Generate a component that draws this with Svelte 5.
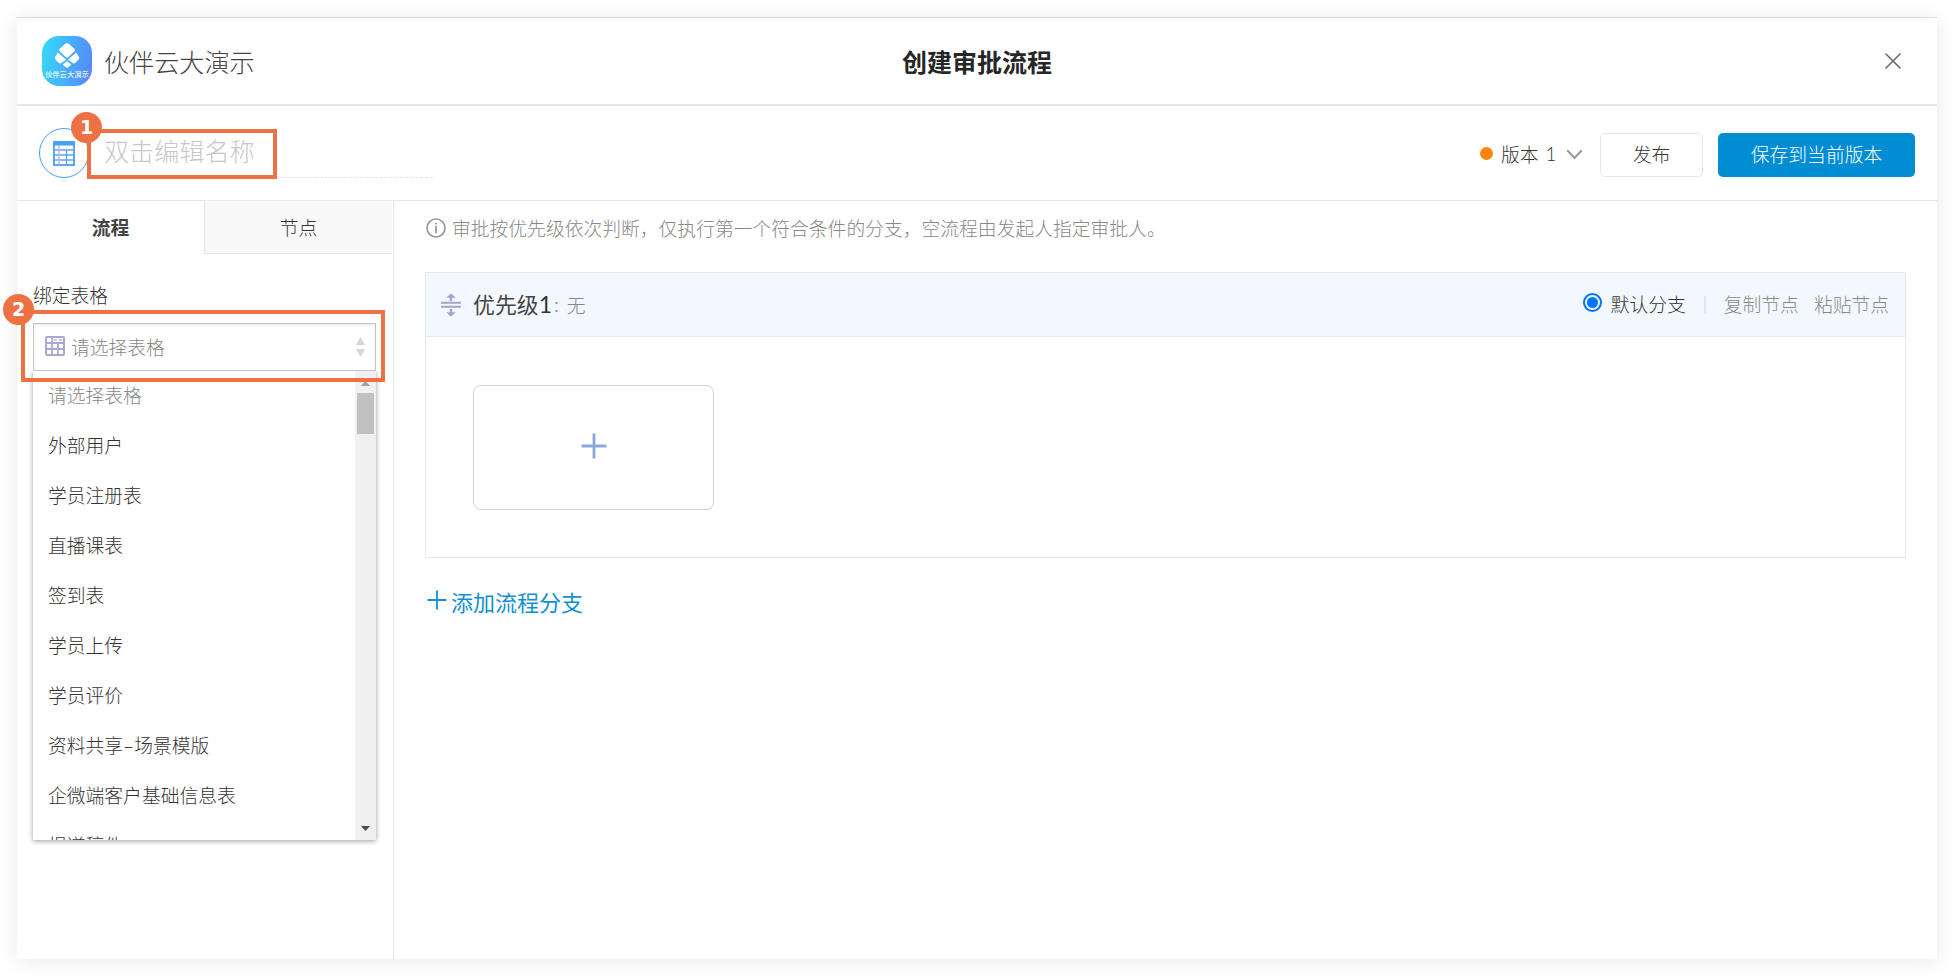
<script>
  const tables = [
    '请选择表格',
    '外部用户',
    '学员注册表',
    '直播课表',
    '签到表',
    '学员上传',
    '学员评价',
    '资料共享-场景模版',
    '企微端客户基础信息表',
    '报道稿件'
  ];
</script>

<div class="window">
  <header class="titlebar">
    <div class="brand">
      <div class="logo">
        <svg width="50" height="50" viewBox="0 0 50 50">
          <g fill="#fff">
            <path d="M23.6 7.6 Q25 6.4 26.4 7.6 L32.6 13 Q33.6 14 32.6 15 L26 21.2 Q25 22 24 21.2 L17.4 15 Q16.4 14 17.4 13 Z" />
            <path d="M15.8 16.6 L24.2 23.8 L18.8 27.2 Q17.8 27.8 16.9 27 L13.2 23.2 Q12.2 22 13.1 20.8 Z" />
            <path d="M34.2 16.6 L25.8 23.8 L31.2 27.2 Q32.2 27.8 33.1 27 L36.8 23.2 Q37.8 22 36.9 20.8 Z" />
            <path d="M25 25.2 L29.4 28.6 L26.2 31.2 Q25 32 23.8 31.2 L20.6 28.6 Z" />
          </g>
        </svg>
        <span class="logo-text">伙伴云大演示</span>
      </div>
      <span class="brand-name">伙伴云大演示</span>
    </div>
    <h1>创建审批流程</h1>
    <svg class="close" width="18" height="18" viewBox="0 0 18 18">
      <path d="M1.5 1.5 L16.5 16.5 M16.5 1.5 L1.5 16.5" stroke="#666" stroke-width="1.5" fill="none" />
    </svg>
  </header>

  <div class="toolbar">
    <div class="flow-icon">
      <svg width="22" height="25" viewBox="0 0 22 25">
        <rect x="1" y="1" width="20" height="23" fill="#fff" stroke="#459ff5" stroke-width="1.8" />
        <rect x="0.5" y="0.5" width="21" height="4" fill="#459ff5" />
        <path d="M1 9 H21 M1 14 H21 M1 19 H21" stroke="#5aa5f5" stroke-width="1.4" />
        <path d="M6 4 V24" stroke="#c0b2f2" stroke-width="1.4" />
        <path d="M13.5 9 V24" stroke="#5aa5f5" stroke-width="1.4" />
      </svg>
    </div>
    <div class="name-field">双击编辑名称</div>
    <div class="actions">
      <span class="dot"></span>
      <span class="version">版本<b>1</b></span>
      <svg class="chevron" width="17" height="12" viewBox="0 0 17 12">
        <path d="M1.2 1.2 L8.5 9 L15.8 1.2" stroke="#9a9a9a" stroke-width="2" fill="none" />
      </svg>
      <button class="publish">发布</button>
      <button class="save">保存到当前版本</button>
    </div>
    <div class="mark mark-name"><i>1</i></div>
  </div>

  <div class="body">
    <aside>
      <nav>
        <div class="tab active">流程</div>
        <div class="tab">节点</div>
      </nav>
      <div class="form">
        <div class="label">绑定表格</div>
        <div class="select-wrap">
          <div class="select">
            <svg width="20" height="20" viewBox="0 0 20 20">
              <rect x="1" y="1" width="18" height="18" rx="1" fill="none" stroke="#a9a9d0" stroke-width="2" />
              <path d="M1 7 H19 M1 13 H19 M7 1 V19 M13 7 V19" stroke="#a9a9d0" stroke-width="1.8" />
              <path d="M9 3.8 H12 M13.5 3.8 H17" stroke="#a9a9d0" stroke-width="1.2" />
            </svg>
            <span>请选择表格</span>
            <svg class="sort" width="9" height="20" viewBox="0 0 9 20">
              <path d="M4.5 0 L9 8 H0 Z M0 12 H9 L4.5 20 Z" fill="#d6d6d6" />
            </svg>
          </div>
          <div class="mark mark-select"><i>2</i></div>
          <div class="dropdown">
            <ul>
              {#each tables as name, i}
                <li class:placeholder={i === 0}>
                  {#each name.split('-') as part, j}{#if j > 0}<span class="hyphen">-</span>{/if}{part}{/each}
                </li>
              {/each}
            </ul>
            <div class="scrollbar">
              <svg width="9" height="5" viewBox="0 0 9 5"><path d="M0 5 L4.5 0 L9 5 Z" fill="#a0a0a0" /></svg>
              <span class="thumb"></span>
              <svg class="down" width="9" height="5" viewBox="0 0 9 5"><path d="M0 0 L4.5 5 L9 0 Z" fill="#4c4c4c" /></svg>
            </div>
          </div>
        </div>
      </div>
    </aside>

    <main>
      <p class="tip">
        <svg width="20" height="20" viewBox="0 0 20 20">
          <circle cx="10" cy="10" r="9" fill="none" stroke="#999" stroke-width="1.7" />
          <path d="M10 8 V15.2 M10 4.8 V6.6" stroke="#999" stroke-width="1.8" />
        </svg>
        <span>审批按优先级依次判断，仅执行第一个符合条件的分支，空流程由发起人指定审批人。</span>
      </p>

      <section class="branch">
        <div class="branch-head">
          <svg width="22" height="24" viewBox="0 0 22 24">
            <path d="M1 9.8 H21 M1 13.8 H21" stroke="#a3a3cc" stroke-width="2" />
            <path d="M11 1 V8 M11 16 V23" stroke="#a3a3cc" stroke-width="2.4" />
            <path d="M6.2 4.8 L11 0.4 L15.8 4.8 Z M6.2 19.2 L11 23.6 L15.8 19.2 Z" fill="#a3a3cc" />
          </svg>
          <span class="priority">优先级</span><b class="num">1</b><span class="colon">:</span>
          <span class="none">无</span>
          <div class="branch-actions">
            <span class="radio"></span>
            <span class="default">默认分支</span>
            <span class="sep"></span>
            <span class="copy">复制节点</span>
            <span>粘贴节点</span>
          </div>
        </div>
        <div class="canvas">
          <div class="node">
            <svg width="26" height="26" viewBox="0 0 26 26">
              <path d="M13 0.5 V25.5 M0.5 13 H25.5" stroke="#8ca7dd" stroke-width="2.8" />
            </svg>
          </div>
        </div>
      </section>

      <div class="add">
        <svg width="20" height="20" viewBox="0 0 20 20">
          <path d="M10 0.5 V19.5 M0.5 10 H19.5" stroke="#118fd2" stroke-width="1.8" />
        </svg>
        <span>添加流程分支</span>
      </div>
    </main>
  </div>
</div>

<style>
  :global(body) {
    background: #fff;
    overflow: hidden;
  }
  * {
    box-sizing: border-box;
  }
  .window {
    width: 1920px;
    height: 942px;
    margin: 17px;
    display: flex;
    flex-direction: column;
    background: #fff;
    border-top: 1px solid #dadada;
    box-shadow: 0 2px 20px rgba(0, 0, 0, 0.09);
    font-family: 'Noto Sans CJK SC', sans-serif;
    font-weight: 300;
    font-size: 18.8px;
    line-height: 28px;
    color: #333;
    white-space: nowrap;
  }
  .titlebar {
    height: 88px;
    display: grid;
    grid-template-columns: 1fr auto 1fr;
    align-items: center;
    border-bottom: 2px solid #e8e8e8;
  }
  .brand {
    display: flex;
    align-items: center;
    gap: 12px;
    padding-left: 25px;
  }
  .logo {
    width: 50px;
    height: 50px;
    border-radius: 17px;
    background: linear-gradient(100deg, #36dcf7, #45b4fb 45%, #5a83fa);
    position: relative;
    overflow: hidden;
  }
  .logo-text {
    position: absolute;
    left: 3px;
    top: 33px;
    font-size: 7.3px;
    line-height: 11px;
    font-weight: 500;
    color: #e6f6ff;
  }
  .brand-name {
    font-size: 25.1px;
    line-height: 36px;
    color: #444;
    padding-bottom: 1px;
  }
  h1 {
    margin: 0;
    font-size: 25px;
    line-height: 36px;
    font-weight: 700;
    color: #262626;
  }
  .close {
    justify-self: end;
    margin-right: 35px;
  }
  .toolbar {
    height: 95px;
    display: flex;
    align-items: center;
    padding: 0 22px;
    border-bottom: 1px solid #e6e6e6;
    position: relative;
  }
  .flow-icon {
    width: 50px;
    height: 50px;
    border: 1px solid #459ff5;
    border-radius: 50%;
    display: grid;
    place-items: center;
  }
  .name-field {
    width: 329px;
    height: 50px;
    margin-left: 15px;
    font-size: 25.1px;
    line-height: 44px;
    color: #c8c8c8;
    border-bottom: 1px dashed #e2e2e2;
  }
  .actions {
    margin-left: auto;
    display: flex;
    align-items: center;
    padding-top: 3px;
  }
  .dot {
    width: 13px;
    height: 13px;
    margin-bottom: 3px;
    border-radius: 50%;
    background: #ff8606;
  }
  .version {
    margin: 0 0 2px 8px;
    display: flex;
    width: 65px;
  }
  b {
    font-family: Lato, sans-serif;
    font-weight: 300;
  }
  .version b {
    margin-left: 7px;
  }
  .chevron {
    margin-top: 1px;
  }
  button {
    font: inherit;
    height: 44px;
    padding: 0 0 2px;
    border-radius: 5px;
  }
  .publish {
    width: 103px;
    margin-left: 17px;
    background: #fff;
    border: 1px solid #e6e6e6;
    color: #333;
  }
  .save {
    width: 197px;
    margin-left: 15px;
    background: #008dd4;
    border: 0;
    color: #fff;
  }
  .mark {
    position: absolute;
    border: 4px solid #ee7144;
    z-index: 5;
  }
  .mark i {
    position: absolute;
    width: 31px;
    height: 31px;
    border-radius: 50%;
    background: #ee7144;
    color: #fff;
    font: 700 19px/31px 'DejaVu Sans', sans-serif;
    text-align: center;
  }
  .mark-name {
    left: 70px;
    top: 23px;
    width: 190px;
    height: 50px;
  }
  .mark-name i {
    left: -20px;
    top: -21px;
  }
  .mark-select {
    left: -12px;
    top: -13px;
    width: 364px;
    height: 72px;
  }
  .mark-select i {
    left: -22px;
    top: -20px;
  }
  .body {
    flex: 1;
    display: flex;
    min-height: 0;
  }
  aside {
    width: 377px;
    border-right: 1px solid #e6e6e6;
  }
  nav {
    display: flex;
    height: 53px;
  }
  .tab {
    width: 188px;
    text-align: center;
    line-height: 51px;
    background: #f8f8f8;
    border-left: 1px solid #e6e6e6;
    border-bottom: 1px solid #e6e6e6;
  }
  .tab.active {
    width: 187px;
    background: #fff;
    border: 0;
    font-weight: 700;
    color: #444;
  }
  .form {
    padding: 27px 16px 0;
  }
  .label {
    height: 42px;
  }
  .select-wrap {
    position: relative;
    width: 343px;
  }
  .select {
    height: 48px;
    display: flex;
    align-items: center;
    gap: 7px;
    padding: 0 10px 0 11px;
    border: 1px solid #c4c4c4;
    box-shadow: inset 0 2px 3px rgba(0, 0, 0, 0.07);
    color: #888;
  }
  .select svg:first-child {
    margin-top: -2px;
  }
  .select span {
    margin-left: -1px;
  }
  .sort {
    margin-left: auto;
  }
  .dropdown {
    position: absolute;
    left: 0;
    top: 48px;
    width: 343px;
    height: 469px;
    display: flex;
    background: #fff;
    box-shadow: 0 1px 5px rgba(0, 0, 0, 0.4);
    overflow: hidden;
    clip-path: inset(0 -10px -10px -10px);
  }
  ul {
    flex: 1;
    margin: 0;
    padding: 0;
    list-style: none;
  }
  li {
    height: 50px;
    line-height: 48px;
    padding-left: 15px;
  }
  .hyphen {
    display: inline-block;
    width: 11px;
    text-align: center;
    transform: scaleX(1.6);
  }
  .placeholder {
    color: #888;
  }
  .scrollbar {
    width: 21px;
    display: flex;
    flex-direction: column;
    align-items: center;
    background: #f0f0f0;
    padding: 10px 0 9px;
  }
  .thumb {
    width: 17px;
    height: 41px;
    margin-top: 7px;
    background: #c1c1c1;
  }
  .down {
    margin-top: auto;
  }
  main {
    flex: 1;
    padding: 12px 31px 0 31px;
  }
  .tip {
    margin: 0;
    height: 30px;
    display: flex;
    align-items: center;
    gap: 7px;
    color: #888;
  }
  .tip svg {
    margin-left: 1px;
  }
  .tip span {
    margin-left: -1px;
  }
  .branch {
    margin-top: 29px;
    border: 1px solid #e6e8ea;
    height: 286px;
  }
  .branch-head {
    height: 64px;
    display: flex;
    align-items: center;
    padding: 0 16px 2px 14px;
    background: #f3f8ff;
    border-bottom: 1px solid #e8e9eb;
  }
  .branch-head > svg {
    margin-top: 2px;
  }
  .priority {
    margin-left: 11px;
    font-size: 21.9px;
    font-weight: 400;
    color: #444;
  }
  .num {
    font-size: 23px;
    font-weight: 400;
  }
  .colon {
    margin-left: 2px;
    color: #888;
  }
  .none {
    margin-left: 8px;
    padding-top: 2px;
    color: #888;
  }
  .branch-actions {
    margin-left: auto;
    display: flex;
    align-items: center;
    color: #888;
  }
  .radio {
    width: 19px;
    height: 19px;
    border-radius: 50%;
    border: 2px solid #0075ff;
    background: #0075ff;
    background-clip: content-box;
    padding: 2px;
    margin-top: -2px;
  }
  .default {
    margin-left: 9px;
    color: #333;
  }
  .sep {
    width: 2px;
    height: 18px;
    margin: 2px 18px 0 18px;
    background: #e3e7f3;
  }
  .copy {
    margin-right: 15px;
  }
  .canvas {
    padding: 48px 47px;
  }
  .node {
    width: 241px;
    height: 125px;
    display: grid;
    place-items: center;
    padding: 0 0 3px 1px;
    border: 1px solid #d0d0d0;
    border-radius: 8px;
  }
  .add {
    display: flex;
    align-items: center;
    gap: 4px;
    margin: 29px 0 0 2px;
    font-size: 22px;
    color: #118fd2;
    font-weight: 400;
  }
  .add svg {
    margin-top: -2px;
  }
</style>
